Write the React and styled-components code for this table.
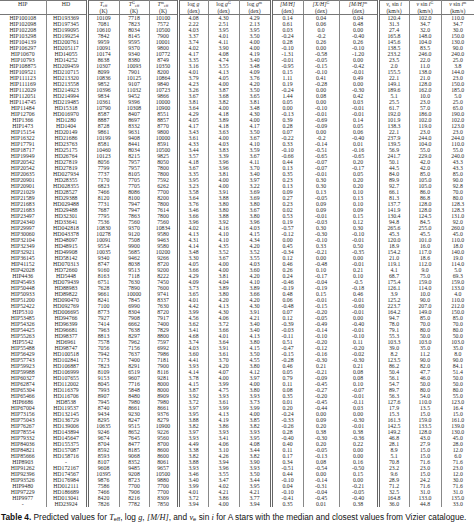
import React from 'react'
import styled, { createGlobalStyle } from 'styled-components'

const GlobalStyle = createGlobalStyle`
    html, body {
        margin: 0;
        padding: 0;
        background: #fff;
    }
`

const rows = `HIP100108 HD193369 10109 7718 10100 4.08 4.30 4.29 0.14 0.04 0.04 120.4 102.0 110.0
HIP102098 HD197345 7081 7823 7572 2.22 2.51 2.13 0.61 0.06 0.48 31.3 34.7 34.7
HIP102208 HD199095 10610 8034 10500 4.03 3.95 3.95 0.03 0.0 0.00 27.4 32.0 30.0
HIP103298 HD199254 7842 8145 7900 3.37 4.01 3.50 -0.24 -0.2 -0.40 165.8 148.0 150.0
HIP104139 HD200761 9959 9595 10001 3.74 4.11 4.00 0.28 0.26 0.26 145.6 104.0 130.0
HIP106297 HD205117 10091 9370 9800 4.02 3.90 4.00 -0.10 0.00 -0.10 138.5 83.5 90.0
HIP10670 HD14055 10174 9340 10772 4.17 4.08 4.19 -1.31 -0.58 -1.20 233.2 246.0 240.0
HIP10793 HD14252 8638 8380 8749 3.35 4.74 3.40 -0.01 -0.05 0.00 23.5 22.0 25.0
HIP108875 HD209459 10307 10093 10350 3.16 3.55 3.48 -0.95 -0.15 -0.42 2.0 11.0 3.8
HIP109521 HD210715 8099 7901 8200 4.01 4.13 4.09 0.15 -0.10 -0.01 155.5 138.0 144.0
HIP111123 HD213320 10836 10125 10864 3.79 4.05 3.76 1.11 0.41 0.49 22.1 21.0 23.0
HIP111169 HD213558 9852 9107 9840 4.23 4.00 4.20 0.19 -0.28 0.00 149.1 128.0 150.0
HIP112029 HD214923 10396 11032 10723 3.26 3.87 3.50 -0.24 0.00 -0.30 189.6 162.0 185.0
HIP112051 HD214994 9834 9452 9866 3.67 3.68 3.65 1.44 0.08 0.42 5.1 10.0 5.0
HIP114745 HD219485 10361 9396 10000 3.81 3.82 3.81 0.05 0.00 0.03 25.5 23.0 25.0
HIP11484 HD15318 10790 10308 10900 3.64 4.00 3.48 0.00 -0.10 -0.01 61.7 57.0 65.0
HIP12706 HD016970 8587 8407 8551 4.29 4.18 4.30 -0.13 -0.01 -0.01 192.0 186.0 190.0
HIP1366 HD1280 8887 8697 8857 4.05 3.89 4.00 0.39 -0.69 0.14 101.9 102.0 102.0
HIP1473 HD1404 8728 8332 8770 4.17 4.18 4.17 0.28 -0.09 0.05 138.3 119.0 123.0
HIP15154 HD20149 9861 9631 9800 3.43 3.63 3.50 0.07 0.00 0.06 22.1 23.0 23.0
HIP16322 HD21686 10199 9408 10000 3.61 4.00 3.67 -0.22 -0.2 -0.40 237.9 244.0 244.0
HIP17791 HD23763 8581 8441 8591 4.33 4.03 4.10 0.33 -0.14 0.01 139.5 104.0 110.0
HIP18717 HD25175 10460 8034 10500 3.44 3.83 3.59 -0.10 -0.51 -0.16 56.9 55.0 55.0
HIP19949 HD26764 10123 8215 9825 3.57 3.39 3.67 -0.66 -0.65 -0.65 241.7 229.0 240.0
HIP20542 HD27819 8056 7957 8050 4.18 3.96 4.11 0.44 -0.07 0.20 50.1 42.0 43.3
HIP20542 HD27819 7799 7957 7800 3.67 3.96 3.70 0.13 -0.07 -0.17 44.5 42.0 43.3
HIP20635 HD027934 7737 8105 7800 3.35 3.81 3.40 0.35 -0.01 0.05 84.0 85.0 85.0
HIP20901 HD28355 7170 7705 7592 3.95 4.00 3.97 0.23 0.30 0.20 89.9 105.0 90.0
HIP20901 HD028355 6823 7705 6262 3.23 4.00 3.22 0.13 0.30 0.20 92.7 105.0 92.8
HIP21029 HD28527 7466 8086 7700 3.58 3.91 3.69 0.09 0.13 0.10 66.1 86.0 70.0
HIP21589 HD29388 8120 8100 8200 3.64 3.88 3.69 0.27 -0.05 0.13 81.3 86.8 80.0
HIP21683 HD029488 7731 7947 7800 3.76 3.80 3.80 0.23 0.09 0.10 137.7 128.0 128.3
HIP21683 HD29488 7687 7947 7614 3.46 3.80 3.67 0.02 0.09 0.09 141.9 128.0 128.3
HIP23497 HD32301 7795 7863 7800 3.66 3.88 3.80 0.53 -0.01 0.15 130.4 124.5 131.0
HIP24340 HD33641 7536 7560 7560 3.96 3.92 3.96 0.19 -0.03 0.12 94.8 84.5 92.0
HIP29997 HD042818 10830 9370 10834 4.02 4.16 4.03 -0.57 0.30 0.30 265.6 255.0 260.0
HIP30060 HD043378 10278 9120 9580 4.13 4.10 4.15 -0.12 -0.30 -0.10 45.3 45.5 45.0
HIP32104 HD48097 10091 7508 9463 4.31 4.10 4.34 0.00 -0.10 -0.01 120.0 101.0 110.0
HIP32349 HD48915 9554 9900 9580 4.14 4.35 4.20 0.45 0.33 0.50 18.9 16.0 18.0
HIP32921 HD49908 10035 5685 10200 3.48 3.52 3.52 -0.34 -0.21 -0.35 154.2 117.0 140.0
HIP36145 HD58142 9340 9462 9266 3.30 3.67 3.55 0.12 0.00 0.00 21.0 18.6 19.0
HIP41152 HD070313 8747 8038 8720 4.05 4.00 4.03 0.46 -0.48 -0.01 119.1 112.0 114.0
HIP42028 HD72660 9160 9513 9200 3.66 4.00 3.60 0.26 0.10 0.21 4.1 9.0 5.0
HIP4436 HD5448 8163 7118 8222 4.29 3.81 4.20 0.24 -0.17 0.10 68.7 75.0 69.3
HIP45493 HD079439 6751 7630 7450 4.09 4.04 4.10 -0.46 -0.04 -0.5 175.4 159.0 159.0
HIP50448 HD88983 7628 7890 7600 3.73 3.89 3.89 -0.19 -0.19 -0.18 126.1 114.0 133.0
HIP50933 HD89822 9661 10000 9741 3.65 3.80 3.66 0.48 0.15 0.46 3.9 10.0 4.0
HIP51200 HD090470 8241 7845 8337 4.01 4.20 4.20 0.06 -0.01 -0.01 125.2 90.0 110.0
HIP52422 HD092769 7100 6990 7630 4.42 4.13 4.30 -0.48 -0.15 -0.60 223.7 207.0 212.0
HIP5310 HD006695 8773 8304 8720 3.99 4.30 3.91 0.07 -0.20 -0.01 164.2 149.0 150.0
HIP53485 HD94766 7927 7908 7917 4.56 4.06 4.21 0.12 -0.05 0.00 94.7 85.0 85.0
HIP54326 HD96399 7414 6662 7400 3.62 3.72 3.40 -0.39 -0.49 -0.40 78.0 70.0 70.0
HIP54425 HD96681 7963 7638 7829 3.41 3.66 3.40 -0.03 -0.14 -0.01 79.1 80.0 80.0
HIP55263 HD98377 8813 8297 8800 4.68 4.01 4.13 -0.11 -0.10 -0.10 55.3 50.0 50.0
HIP5542 HD6961 7578 7962 7597 3.74 3.64 3.80 0.51 -0.20 0.11 103.3 103.0 103.0
HIP55488 HD98747 7056 7156 6992 4.03 3.91 4.15 -0.47 -0.12 -0.20 39.0 35.0 35.0
HIP56429 HD100518 7942 7637 7986 3.60 3.61 3.50 -0.15 -0.16 -0.02 8.2 11.2 8.0
HIP57743 HD102841 7173 7400 7181 4.41 3.70 4.55 -0.28 -0.30 -0.30 123.5 90.0 90.0
HIP59923 HD106887 7823 8291 7900 3.93 4.20 3.80 0.46 0.21 0.21 86.2 82.0 84.1
HIP59988 HD106999 8109 6519 8116 4.14 4.07 4.12 0.05 -0.21 0.08 50.4 47.7 51.4
HIP60327 HD107655 9153 9607 9281 3.78 4.00 3.97 0.79 -0.09 0.08 56.1 46.0 50.0
HIP62874 HD112002 8045 7716 8000 4.15 3.99 4.00 0.11 -0.45 0.10 54.7 50.0 50.0
HIP65304 HD116379 7993 5848 8000 3.87 4.75 3.80 0.08 -0.27 -0.07 89.7 80.0 80.0
HIP65466 HD116706 8907 8480 8909 3.92 3.93 3.93 0.35 -0.20 -0.01 56.3 54.0 55.0
HIP6686 HD8538 7945 7980 7980 3.72 3.61 3.73 0.01 -0.45 -0.11 127.6 110.0 123.0
HIP67004 HD119537 8740 8661 8661 3.97 3.99 3.99 0.20 -0.44 0.03 17.9 13.5 16.4
HIP73156 HD132145 9434 9230 9376 3.95 4.13 4.00 -0.24 0.00 0.00 15.3 15.0 15.0
HIP75043 HD136729 8295 8247 8279 3.88 4.19 3.85 -0.33 0.09 -0.30 161.3 159.0 161.0
HIP76267 HD139006 10635 9515 10900 3.82 3.86 3.82 -0.26 0.20 -0.01 142.5 133.5 139.0
HIP78554 HD143894 9246 8652 9226 3.97 3.93 3.93 0.28 0.38 0.38 149.2 128.0 130.0
HIP79332 HD145647 9674 7645 9560 3.93 3.41 3.95 -0.40 -0.30 -0.36 46.8 43.0 45.0
HIP84036 HD155375 8704 8477 8700 4.49 4.06 4.08 0.40 0.20 0.22 28.1 27.9 28.0
HIP84821 HD157087 8592 8185 8600 3.38 3.10 3.44 0.11 -0.05 0.00 8.9 15.0 12.0
HIP85666 HD158716 8593 9068 8600 3.82 4.26 3.82 0.17 -0.13 0.00 5.1 15.0 6.0
HIP8903 - 8107 8352 8061 3.88 3.94 3.90 0.34 0.08 0.16 70.8 71.6 71.6
HIP91262 HD172167 9608 9485 9657 3.93 3.96 3.93 -0.51 -0.54 -0.50 23.2 23.0 23.0
HIP92396 HD174567 10395 9208 10500 3.46 3.55 3.50 0.44 0.00 0.15 9.6 15.0 12.0
HIP93526 HD176984 9876 8723 9880 3.40 3.47 3.44 -0.10 -0.14 0.00 28.9 24.2 30.0
HIP9480 HD012111 7586 7700 7700 3.99 4.02 3.95 0.04 -0.31 -0.21 71.2 71.6 71.6
HIP97229 HD186689 7466 7906 7700 4.01 4.21 4.21 -0.10 -0.04 -0.05 32.5 31.0 31.0
HIP9977 HD013041 8420 8216 8309 3.72 3.86 3.77 -0.41 -0.45 -0.40 164.8 133.0 135.0
- HD23924 7826 7782 7850 3.94 4.00 3.94 0.35 0.01 0.38 36.0 44.8 33.0`
    .split('\n')
    .map((line) => line.trim().split(/\s+/))

// widths of the 14 columns, and which ones close a group with a double rule
const widths = [46, 41, 32, 30, 29, 30, 31, 32, 32, 36, 39, 31, 32, 33]
const groupEnds = [1, 4, 7, 10]

const I = styled.i`
    font-style: italic;
`

const Sub = styled.sub`
    font-size: 0.7em;
    vertical-align: -0.2em;
    line-height: 0;
`

const Sup = styled.sup`
    font-size: 0.7em;
    vertical-align: 0.5em;
    line-height: 0;
`

const headers = [
    ['HIP', null],
    ['HD', null],
    [<><I>T</I><Sub>eff</Sub></>, '(K)'],
    [<><I>T</I><Sup>G</Sup><Sub>eff</Sub></>, '(K)'],
    [<><I>T</I><Sup>m</Sup><Sub>eff</Sub></>, '(K)'],
    [<>log <I>g</I></>, '(dex)'],
    [<>log <I>g</I><Sup>G</Sup></>, '(dex)'],
    [<>log <I>g</I><Sup>m</Sup></>, '(dex)'],
    [<I>[M/H]</I>, '(dex)'],
    [<><I>[X/H]</I><Sup>G</Sup></>, '(dex)'],
    [<><I>[M/H]</I><Sup>m</Sup></>, '(dex)'],
    [<><I>v</I><Sub>e</Sub> sin <I>i</I></>, '(km/s)'],
    [<><I>v</I> sin <I>i</I><Sup>G</Sup></>, '(km/s)'],
    [<><I>v</I> sin <I>i</I><Sup>m</Sup></>, '(km/s)'],
]

const Page = styled.div`
    width: 474px;
    height: 526px;
    overflow: hidden;
    background: #fff;
    display: flex;
    flex-direction: column;
`

const Table = styled.table`
    width: 474px;
    table-layout: fixed;
    border-collapse: collapse;
    font-family: 'Liberation Serif', 'DejaVu Serif', serif;
    font-size: 5.8px;
    color: #2a2a2a;
    border-top: 1px solid #777;
`

const Th = styled.th`
    font-weight: normal;
    text-align: center;
    height: 6px;
    line-height: 6px;
    padding: 0;
    white-space: nowrap;
    border-right: ${(p) => (p.$double ? '3px double #666' : '1px solid #888')};
    border-bottom: ${(p) => (p.$last ? '1px solid #777' : 'none')};
    &:last-child {
        border-right: none;
    }
`

const Td = styled.td`
    text-align: center;
    height: 6px;
    line-height: 6px;
    padding: 0;
    white-space: nowrap;
    overflow: hidden;
    border-right: ${(p) => (p.$double ? '3px double #666' : '1px solid #888')};
    &:last-child {
        border-right: none;
    }
`

const HeadRowTop = styled.tr`
    height: 7px;
`

const Caption = styled.div`
    margin-top: 5px;
    padding-left: 1px;
    white-space: nowrap;
    font-family: 'Liberation Sans', Arial, sans-serif;
    font-size: 8.3px;
    color: #111;
    b {
        font-weight: bold;
    }
    i {
        font-family: 'Liberation Serif', serif;
        font-style: italic;
    }
`

export default function App() {
    return (
        <>
            <GlobalStyle />
            <Page>
                <Table>
                    <colgroup>
                        {widths.map((w, i) => (
                            <col key={i} style={{ width: w }} />
                        ))}
                    </colgroup>
                    <thead>
                        <HeadRowTop>
                            {headers.map(([top], i) => (
                                <Th key={i} $double={groupEnds.includes(i)}>
                                    {top}
                                </Th>
                            ))}
                        </HeadRowTop>
                        <tr>
                            {headers.map(([, unit], i) => (
                                <Th key={i} $last $double={groupEnds.includes(i)}>
                                    {unit}
                                </Th>
                            ))}
                        </tr>
                    </thead>
                    <tbody>
                        {rows.map((cells, r) => (
                            <tr key={r}>
                                {cells.map((c, i) => (
                                    <Td key={i} $double={groupEnds.includes(i)}>
                                        {c}
                                    </Td>
                                ))}
                            </tr>
                        ))}
                    </tbody>
                </Table>
                <Caption>
                    <b>Table 4.</b> Predicted values for <i>T</i>
                    <Sub>eff</Sub>, log <i>g</i>, <i>[M/H]</i>, and <i>v</i>
                    <Sub>e</Sub> sin <i>i</i> for A stars with the median and
                    closest values from Vizier catalogue.
                </Caption>
            </Page>
        </>
    )
}
